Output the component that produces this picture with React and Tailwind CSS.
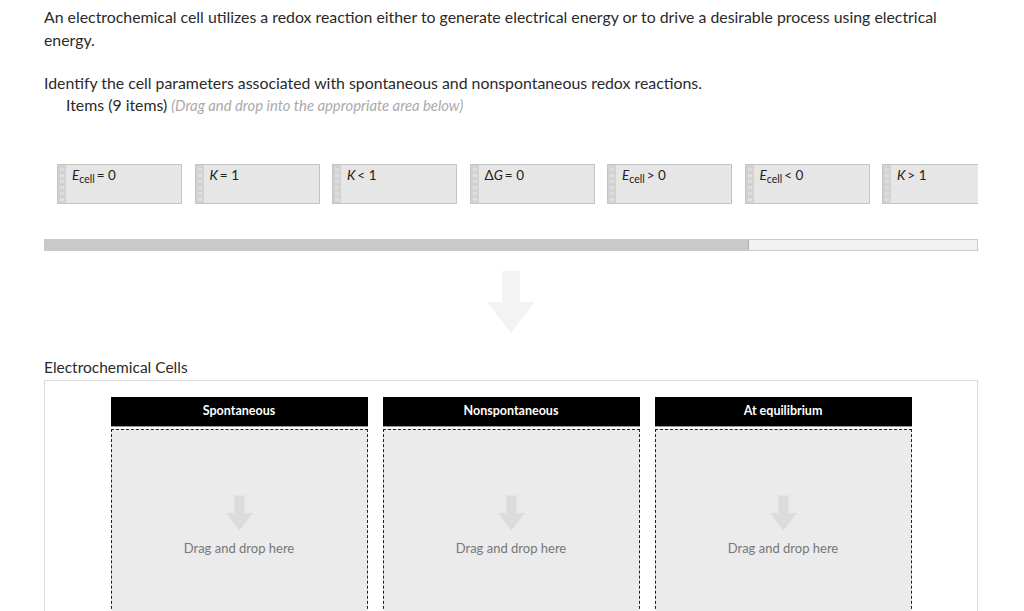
import React from 'react';

const items = [
  { sym: 'E', sub: 'cell', rest: '= 0' },
  { sym: 'K', rest: '= 1' },
  { sym: 'K', rest: '< 1' },
  { pre: 'Δ', sym: 'G', rest: '= 0' },
  { sym: 'E', sub: 'cell', rest: '> 0' },
  { sym: 'E', sub: 'cell', rest: '< 0' },
  { sym: 'K', rest: '> 1' },
];

const bins = ['Spontaneous', 'Nonspontaneous', 'At equilibrium'];

const Handle = () => (
  <div className="w-[8px] h-full bg-[#d2d2d2] flex flex-col items-center gap-[3px] pt-[3px] shrink-0">
    {[0, 1, 2, 3, 4, 5].map((i) => (
      <div key={i} className="w-[4px] h-[3px] bg-[#dedede]" />
    ))}
  </div>
);

const Card = ({ item }) => (
  <div className="w-[125px] h-[40px] shrink-0 border border-[#c4c4c4] bg-[#e6e6e6] flex">
    <Handle />
    <div className="pl-[6px] pt-[1px] text-[13.5px] text-[#222] leading-[18px] whitespace-nowrap">
      {item.pre && <span>{item.pre}</span>}
      <i>{item.sym}</i>
      {item.sub && <sub className="text-[10.5px] align-baseline relative top-[3px]">{item.sub}</sub>}
      <span className="ml-[2px]">{item.rest}</span>
    </div>
  </div>
);

const DownArrow = ({ className, color }) => (
  <svg viewBox="0 0 48 62" className={className}>
    <path d="M15 0h18v31h15L24 62 0 31h15z" fill={color} />
  </svg>
);

export default function App() {
  return (
    <div className="bg-white min-h-screen font-['Lato','Open_Sans',sans-serif] text-[#2a2a2a]">
      <div className="pl-[44px] pr-[46px] pt-[5px]">
        <p className="text-[15.85px] leading-[23px] pr-[30px]">
          An electrochemical cell utilizes a redox reaction either to generate electrical energy or to drive a desirable process using electrical energy.
        </p>
        <p className="text-[15.85px] leading-[23px] mt-[20px]">
          Identify the cell parameters associated with spontaneous and nonspontaneous redox reactions.
        </p>
        <div className="pl-[22px] text-[15.85px] leading-[22px]">
          Items (9 items){' '}
          <i className="text-[14.8px] text-[#aaa]">(Drag and drop into the appropriate area below)</i>
        </div>

        <div className="mt-[48px] overflow-hidden">
          <div className="flex gap-[12.5px] pl-[13px]">
            {items.map((it, i) => (
              <Card key={i} item={it} />
            ))}
          </div>
        </div>

        <div className="mt-[35px] h-[12px] border border-[#c8c8c8] bg-[#f2f2f2] flex">
          <div className="w-[704px] h-full bg-[#c9c9c9] border-r border-[#b0b0b0]" />
        </div>

        <div className="flex justify-center mt-[20px]">
          <DownArrow className="w-[48px] h-[62px]" color="#f3f3f3" />
        </div>

        <div className="mt-[24px] text-[15.5px] leading-[20px]">Electrochemical Cells</div>
        <div className="mt-[3px] border border-[#dcdcdc] h-[240px] flex justify-center gap-[15px] pt-[16px]">
          {bins.map((b) => (
            <div key={b} className="w-[257px] flex flex-col">
              <div className="h-[30px] bg-black text-white text-[12.5px] font-bold flex items-center justify-center border-b border-[#999]">
                {b}
              </div>
              <div className="mt-[2px] flex-1 border border-dashed border-[#222] bg-[#ebebeb] flex flex-col items-center pt-[65px]">
                <DownArrow className="w-[27px] h-[36px]" color="#dcdcdc" />
                <div className="mt-[8px] text-[13px] text-[#777]">Drag and drop here</div>
              </div>
            </div>
          ))}
        </div>
      </div>
    </div>
  );
}
